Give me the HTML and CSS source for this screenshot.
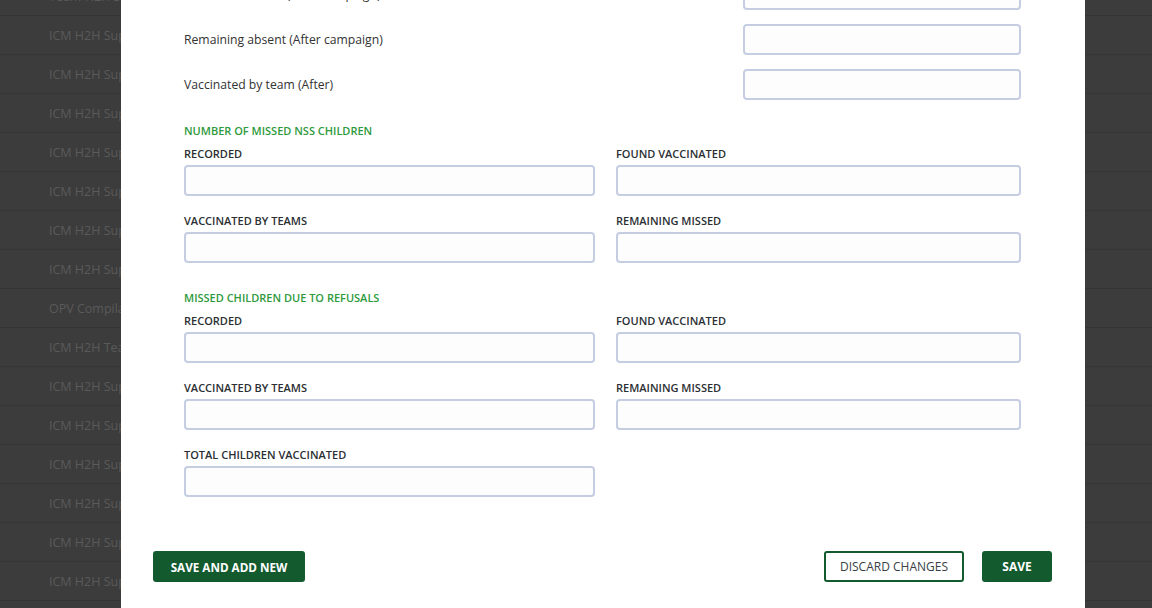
FILE: index.html
```html
<!DOCTYPE html>
<html lang="en">
<head>
<meta charset="utf-8">
<title>Form</title>
<link rel="stylesheet" href="styles.css">
</head>
<body>
<div class="list">
  <div class="row"><span>Team H2H Supervisor</span></div>
  <div class="row"><span>ICM H2H Supervisor</span></div>
  <div class="row"><span>ICM H2H Supervisor</span></div>
  <div class="row"><span>ICM H2H Supervisor</span></div>
  <div class="row"><span>ICM H2H Supervisor</span></div>
  <div class="row"><span>ICM H2H Supervisor</span></div>
  <div class="row"><span>ICM H2H Supervisor</span></div>
  <div class="row"><span>ICM H2H Supervisor</span></div>
  <div class="row"><span>OPV Compilation</span></div>
  <div class="row"><span>ICM H2H Team</span></div>
  <div class="row"><span>ICM H2H Supervisor</span></div>
  <div class="row"><span>ICM H2H Supervisor</span></div>
  <div class="row"><span>ICM H2H Supervisor</span></div>
  <div class="row"><span>ICM H2H Supervisor</span></div>
  <div class="row"><span>ICM H2H Supervisor</span></div>
  <div class="row"><span>ICM H2H Supervisor</span></div>
</div>

<div class="modal">
  <div class="form">
    <div class="pair-rows">
      <div class="pair"><span class="pair-label">Found vaccinated (After campaign)</span><input class="input" type="text"></div>
      <div class="pair"><span class="pair-label">Remaining absent (After campaign)</span><input class="input" type="text"></div>
      <div class="pair"><span class="pair-label">Vaccinated by team (After)</span><input class="input" type="text"></div>
    </div>

    <div class="section first">
      <div class="section-title">NUMBER OF MISSED NSS CHILDREN</div>
      <div class="fields">
        <div class="field"><label class="field-label">RECORDED</label><input class="input" type="text"></div>
        <div class="field"><label class="field-label">FOUND VACCINATED</label><input class="input" type="text"></div>
        <div class="field"><label class="field-label">VACCINATED BY TEAMS</label><input class="input" type="text"></div>
        <div class="field"><label class="field-label">REMAINING MISSED</label><input class="input" type="text"></div>
      </div>
    </div>

    <div class="section">
      <div class="section-title">MISSED CHILDREN DUE TO REFUSALS</div>
      <div class="fields">
        <div class="field"><label class="field-label">RECORDED</label><input class="input" type="text"></div>
        <div class="field"><label class="field-label">FOUND VACCINATED</label><input class="input" type="text"></div>
        <div class="field"><label class="field-label">VACCINATED BY TEAMS</label><input class="input" type="text"></div>
        <div class="field"><label class="field-label">REMAINING MISSED</label><input class="input" type="text"></div>
        <div class="field"><label class="field-label">TOTAL CHILDREN VACCINATED</label><input class="input" type="text"></div>
      </div>
    </div>
  </div>

  <div class="footer">
    <button class="btn btn-primary btn-wide">SAVE AND ADD NEW</button>
    <div class="footer-right">
      <button class="btn btn-outline">DISCARD CHANGES</button>
      <button class="btn btn-primary btn-save">SAVE</button>
    </div>
  </div>
</div>
</body>
</html>
```

FILE: styles.css
```css
* { box-sizing: border-box; }

html, body {
  margin: 0;
  padding: 0;
  width: 1152px;
  height: 608px;
  overflow: hidden;
}

body {
  background: #3c3c3c;
  font-family: "Open Sans", "Liberation Sans", sans-serif;
  position: relative;
}

.list {
  margin-top: -23px;
}

.row {
  height: 39px;
  border-bottom: 1px solid #353535;
  display: flex;
  align-items: center;
  padding-left: 49px;
  color: #5a5a5a;
  font-size: 12.5px;
  white-space: nowrap;
}

.modal {
  position: absolute;
  left: 121px;
  top: 0;
  width: 964px;
  height: 608px;
  background: #ffffff;
  overflow: hidden;
}

.form {
  margin-top: -21px;
  padding: 0 64px 0 63px;
}

.pair-rows {
  display: flex;
  flex-direction: column;
  gap: 14px;
}

.pair {
  display: grid;
  grid-template-columns: 1fr 278px;
  align-items: center;
  height: 31px;
}

.pair-label {
  font-size: 12.2px;
  color: #333333;
}

.input {
  display: block;
  width: 100%;
  height: 31px;
  border: 2px solid #c5cde2;
  border-radius: 4px;
  background: #fdfdfe;
  font-family: inherit;
  font-size: 13px;
  padding: 0 8px;
  margin: 0;
  outline: none;
}

.section {
  margin-top: 27px;
}

.section.first {
  margin-top: 23px;
}

.section-title {
  color: #2e9a3c;
  font-size: 11px;
  font-weight: 600;
  line-height: 16px;
  margin-bottom: 7px;
}

.fields {
  display: grid;
  grid-template-columns: 411px 405px;
  column-gap: 21px;
  row-gap: 17px;
}

.field-label {
  display: block;
  font-size: 11px;
  font-weight: 600;
  line-height: 16px;
  color: #2b2f33;
  margin-bottom: 3px;
}

.footer {
  margin-top: 54px;
  padding: 0 33px 0 32px;
  display: flex;
  justify-content: space-between;
  align-items: center;
}

.footer-right {
  display: flex;
  gap: 18px;
}

.btn {
  height: 31px;
  border-radius: 3px;
  font-family: inherit;
  font-size: 12px;
  padding: 0;
  cursor: pointer;
}

.btn-primary {
  background: #135a2f;
  border: none;
  color: #ffffff;
  font-weight: 700;
}

.btn-wide {
  width: 152px;
  font-size: 11.7px;
}

.btn-save {
  width: 70px;
}

.btn-outline {
  width: 140px;
  background: #ffffff;
  border: 2px solid #135a2f;
  color: #3a3f44;
  font-weight: 400;
}
```
